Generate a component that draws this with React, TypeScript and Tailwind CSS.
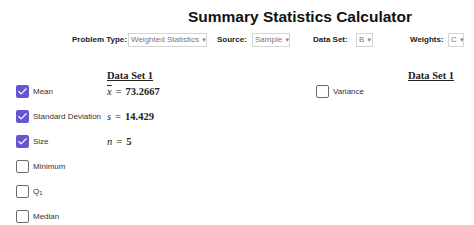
import { Check } from 'lucide-react'

const SANS = '"Liberation Sans", Arial, sans-serif'
const SERIF = '"Liberation Serif", "Times New Roman", serif'

type Row = { label: React.ReactNode; on: boolean; value?: React.ReactNode }

const Eq = () => <span className="font-normal mx-[4px]">=</span>

const ROWS: Row[] = [
  { label: 'Mean', on: true, value: <><span className="italic font-normal overline">x</span><Eq />73.2667</> },
  { label: 'Standard Deviation', on: true, value: <><span className="italic font-normal">s</span><Eq />14.429</> },
  { label: 'Size', on: true, value: <><span className="italic font-normal">n</span><Eq />5</> },
  { label: 'Minimum', on: false },
  { label: <>Q<sub className="text-[6px]">1</sub></>, on: false },
  { label: 'Median', on: false },
]

function Box({ on }: { on: boolean }) {
  return on ? (
    <span className="w-[13px] h-[13px] rounded-[2px] bg-[#6557d2] flex items-center justify-center shrink-0">
      <Check size={11} strokeWidth={2.5} color="white" />
    </span>
  ) : (
    <span className="w-[13px] h-[13px] rounded-[2px] border-[1.5px] border-[#6b6b6b] bg-white shrink-0" />
  )
}

function Select({ text, w }: { text: string; w: string }) {
  return (
    <span className={`${w} h-[14px] border border-[#d4d4d4] flex items-center px-[2px] text-[8px] text-[#777] gap-[2px] whitespace-nowrap shrink-0`}>
      {text}<span className="text-[6px] text-[#888]">▼</span>
    </span>
  )
}

function Label({ text, w }: { text: string; w: string }) {
  return <span className={`${w} shrink-0 font-bold text-[#222] whitespace-nowrap`}>{text}</span>
}

export default function App() {
  return (
    <div className="w-[474px] h-[225px] bg-white overflow-hidden" style={{ fontFamily: SANS }}>
      <h1 className="pl-[188px] pt-[6px] text-[15.5px] font-bold leading-[22px] text-[#111] whitespace-nowrap">Summary Statistics Calculator</h1>

      <div className="flex items-center mt-[4px] pl-[72px] h-[16px] text-[8px]">
        <Label text="Problem Type:" w="w-[56px]" />
        <Select text="Weighted Statistics" w="w-[79px]" />
        <span className="w-[10px] shrink-0" />
        <Label text="Source:" w="w-[35px]" />
        <Select text="Sample" w="w-[38px]" />
        <span className="w-[23px] shrink-0" />
        <Label text="Data Set:" w="w-[43px]" />
        <Select text="B" w="w-[17px]" />
        <span className="w-[37px] shrink-0" />
        <Label text="Weights:" w="w-[38px]" />
        <Select text="C" w="w-[16px]" />
      </div>

      <div className="flex mt-[22px]">
        <div className="w-[300px]">
          <div className="h-[9px] pl-[107px] text-[10.5px] font-bold underline leading-[12px] text-[#222]" style={{ fontFamily: SERIF }}>
            Data Set 1
          </div>
          {ROWS.map((r, i) => (
            <div key={i} className="flex items-center h-[25px] pl-[16px]">
              <Box on={r.on} />
              <span className="ml-[4px] w-[74px] text-[8px] text-[#333] whitespace-nowrap">{r.label}</span>
              {r.value && (
                <span className="text-[10.5px] font-bold text-[#222] whitespace-nowrap" style={{ fontFamily: SERIF }}>{r.value}</span>
              )}
            </div>
          ))}
        </div>
        <div className="flex-1 flex flex-col">
          <div className="h-[9px] pl-[108px] text-[10.5px] font-bold underline leading-[12px] text-[#222]" style={{ fontFamily: SERIF }}>
            Data Set 1
          </div>
          <div className="flex items-center h-[25px] pl-[16px]">
            <Box on={false} />
            <span className="ml-[4px] text-[8px] text-[#333]">Variance</span>
          </div>
        </div>
      </div>
    </div>
  )
}
